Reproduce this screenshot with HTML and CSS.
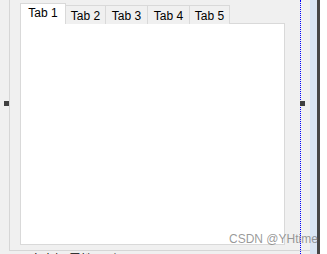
FILE: index.html
```html
<!DOCTYPE html>
<html>
<head>
<meta charset="utf-8">
<link rel="stylesheet" href="styles.css">
</head>
<body>
<div class="page">
  <div class="gutter"></div>
  <div class="col">
    <div class="frame">
      <div class="tabwidget">
        <div class="tabbar">
          <div class="tab sel">Tab 1</div>
          <div class="tab w41">Tab 2</div>
          <div class="tab w43">Tab 3</div>
          <div class="tab w43">Tab 4</div>
          <div class="tab w41">Tab 5</div>
        </div>
        <div class="panel"></div>
      </div>
    </div>
    <div class="caption">文本框 属性图形</div>
  </div>
  <div class="strip"></div>
  <div class="dark"></div>
  <div class="rest"></div>

  <div class="guide"></div>
  <div class="handle hl"></div>
  <div class="handle hr"></div>
  <div class="mark">CSDN @YHtime</div>
</div>
</body>
</html>
```

FILE: styles.css
```css
html, body {
  margin: 0;
  padding: 0;
}
body {
  width: 327px;
  height: 254px;
  overflow: hidden;
  background: #f0f0f0;
  font-family: "Liberation Sans", Arial, sans-serif;
}
.page {
  position: relative;
  display: flex;
  width: 327px;
  height: 254px;
  overflow: hidden;
}
.gutter {
  width: 9px;
  flex: none;
}
.col {
  width: 301px;
  flex: none;
  display: flex;
  flex-direction: column;
}
.frame {
  box-sizing: border-box;
  height: 251px;
  flex: none;
  border-left: 1px solid #d6d6d6;
  border-bottom: 1px solid #d6d6d6;
  padding: 3px 0 0 10px;
}
.tabwidget {
  width: 265px;
  display: flex;
  flex-direction: column;
}
.tabbar {
  display: flex;
  align-items: flex-end;
  height: 21px;
  position: relative;
  z-index: 1;
  margin-bottom: -1px;
}
.tab {
  box-sizing: border-box;
  height: 19px;
  border: 1px solid #d9d9d9;
  border-bottom: none;
  margin-left: -1px;
  background: #f0f0f0;
  color: #000;
  font-size: 12px;
  line-height: 18px;
  padding-top: 1px;
  text-align: center;
}
.tab.sel {
  width: 46px;
  height: 21px;
  margin-left: 0;
  background: #fff;
  padding-top: 0;
  line-height: 19px;
}
.w41 { width: 41px; }
.w43 { width: 43px; }
.panel {
  box-sizing: border-box;
  height: 222px;
  background: #fff;
  border: 1px solid #d9d9d9;
}
.caption {
  padding-left: 21px;
  font-family: "Noto Sans CJK SC", sans-serif;
  font-size: 12px;
  line-height: 14px;
  color: #000;
  margin-top: 1px;
}
.strip {
  width: 7px;
  flex: none;
  background: #d9e5f3;
}
.dark {
  width: 3px;
  flex: none;
  background: #464646;
}
.rest {
  flex: 1;
  background: #fff;
}
.guide {
  position: absolute;
  left: 300px;
  top: 0;
  width: 0;
  height: 254px;
  border-left: 1px dotted #0000ff;
}
.handle {
  position: absolute;
  width: 5px;
  height: 5px;
  background: #404040;
  top: 101px;
}
.hl { left: 4px; }
.hr { left: 300px; }
.mark {
  position: absolute;
  left: 229px;
  top: 232px;
  font-size: 12px;
  line-height: 14px;
  color: rgba(120, 120, 120, 0.75);
}
```
